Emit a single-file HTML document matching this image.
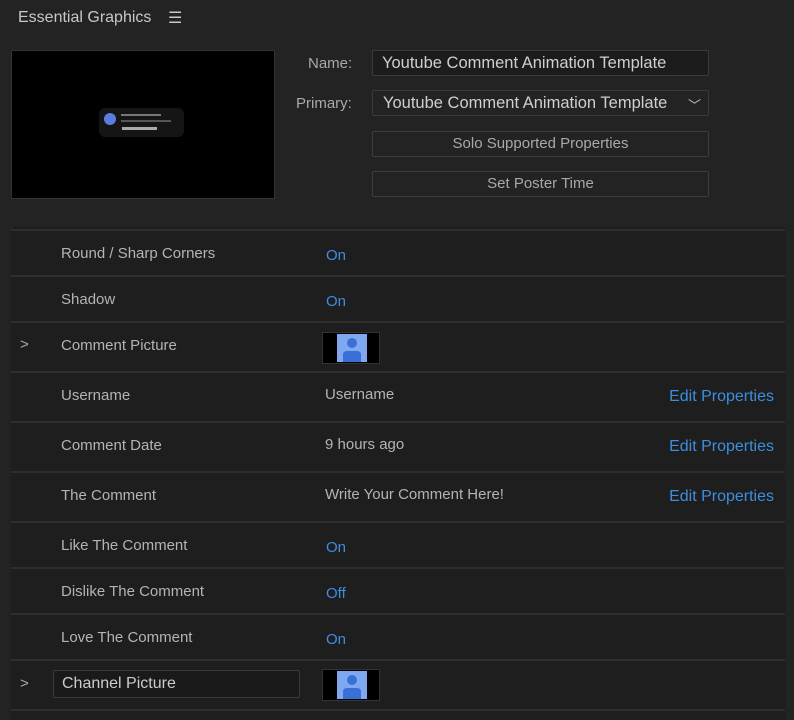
<!DOCTYPE html><html><head><style>
body{margin:0;width:794px;height:720px;background:#232323;font-family:"Liberation Sans",sans-serif;color:#b8b8b8;position:relative;overflow:hidden;font-size:15px}
.a{position:absolute;white-space:nowrap}
.box{position:absolute;background:#1c1c1c;border:1px solid #3a3a3a;box-sizing:border-box;border-radius:2px}
.btn{position:absolute;background:#232323;border:1px solid #3d3d3d;box-sizing:border-box;text-align:center;color:#a9a9a9;border-radius:2px}
.row{position:absolute;left:11px;width:774px;background:#1e1e1e;border-top:2px solid #2e2e2e;box-sizing:border-box}
.lab{position:absolute;left:50px;color:#b4b4b4}
.val{position:absolute;left:314px;color:#b4b4b4}
.on{position:absolute;left:315px;color:#3d8ee0}
.ed{position:absolute;right:11px;color:#3d8ee0;font-size:16px}
.th{position:absolute;left:311px;width:58px;height:32px;background:#000;border:1px solid #333;box-sizing:border-box}
.th div{position:absolute;left:14px;top:1px;width:30px;height:28px;background:#7fa8ee}
.th svg{position:absolute;left:14px;top:1px}
.chev{position:absolute;left:9px;color:#aaa;font-size:15px}
</style></head><body>
<div class="a" style="left:18px;top:9px;font-size:16px;color:#c8c8c8">Essential Graphics</div>
<div class="a" style="left:168px;top:8px;font-size:16px;color:#c8c8c8">☰</div>
<div class="a" style="left:11px;top:50px;width:262px;height:147px;background:#000;border:1px solid #333"></div>
<div class="a" style="left:99px;top:108px;width:85px;height:29px;background:#151515;border-radius:6px"></div>
<div class="a" style="left:104px;top:113px;width:12px;height:12px;background:#5b7de0;border-radius:50%"></div>
<div class="a" style="left:121px;top:114px;width:40px;height:2px;background:#777"></div>
<div class="a" style="left:121px;top:120px;width:50px;height:2px;background:#555"></div>
<div class="a" style="left:122px;top:127px;width:35px;height:3px;background:#aaa"></div>
<div class="a" style="left:308px;top:55px;color:#a9a9a9">Name:</div>
<div class="a" style="left:296px;top:95px;color:#a9a9a9">Primary:</div>
<div class="box" style="left:372px;top:50px;width:337px;height:26px"></div>
<div class="a" style="left:382px;top:54px;color:#cfcfcf;font-size:16.5px">Youtube Comment Animation Template</div>
<div class="box" style="left:372px;top:90px;width:337px;height:26px;background:#232323"></div>
<div class="a" style="left:383px;top:94px;color:#cfcfcf;font-size:16.5px">Youtube Comment Animation Template</div>
<div class="a" style="left:688px;top:95px;color:#bbb;font-size:13px">﹀</div>
<div class="btn" style="left:372px;top:131px;width:337px;height:26px;line-height:24px">Solo Supported Properties</div>
<div class="btn" style="left:372px;top:171px;width:337px;height:26px;line-height:24px">Set Poster Time</div>
<div class="a" style="left:11px;top:227px;width:774px;height:493px;background:#1e1e1e;border-left:1px solid #2e2e2e"></div>
<div class="row" style="top:229px;height:46px"><span class="lab" style="top:14px">Round / Sharp Corners</span><span class="on" style="top:16px">On</span></div>
<div class="row" style="top:275px;height:46px"><span class="lab" style="top:14px">Shadow</span><span class="on" style="top:16px">On</span></div>
<div class="row" style="top:321px;height:50px"><span class="chev" style="top:13px">&gt;</span><span class="lab" style="top:14px">Comment Picture</span><div class="th" style="top:9px"><div></div><svg width="30" height="28"><circle cx="15" cy="9" r="5" fill="#3a6fd8"/><path d="M6 28V21Q6 17 10 17H20Q24 17 24 21V28Z" fill="#3a6fd8"/></svg></div></div>
<div class="row" style="top:371px;height:50px"><span class="lab" style="top:14px">Username</span><span class="val" style="top:13px">Username</span><span class="ed" style="top:15px">Edit Properties</span></div>
<div class="row" style="top:421px;height:50px"><span class="lab" style="top:14px">Comment Date</span><span class="val" style="top:13px">9 hours ago</span><span class="ed" style="top:15px">Edit Properties</span></div>
<div class="row" style="top:471px;height:50px"><span class="lab" style="top:14px">The Comment</span><span class="val" style="top:13px">Write Your Comment Here!</span><span class="ed" style="top:15px">Edit Properties</span></div>
<div class="row" style="top:521px;height:46px"><span class="lab" style="top:14px">Like The Comment</span><span class="on" style="top:16px">On</span></div>
<div class="row" style="top:567px;height:46px"><span class="lab" style="top:14px">Dislike The Comment</span><span class="on" style="top:16px">Off</span></div>
<div class="row" style="top:613px;height:46px"><span class="lab" style="top:14px">Love The Comment</span><span class="on" style="top:16px">On</span></div>
<div class="row" style="top:659px;height:50px"><span class="chev" style="top:14px">&gt;</span><div class="box" style="left:42px;top:9px;width:247px;height:28px;background:#1a1a1a"></div><span class="lab" style="left:51px;top:14px;color:#ccc;font-size:16px">Channel Picture</span><div class="th" style="top:8px"><div></div><svg width="30" height="28"><circle cx="15" cy="9" r="5" fill="#3a6fd8"/><path d="M6 28V21Q6 17 10 17H20Q24 17 24 21V28Z" fill="#3a6fd8"/></svg></div></div>
<div class="row" style="top:709px;height:11px"></div>
</body></html>
